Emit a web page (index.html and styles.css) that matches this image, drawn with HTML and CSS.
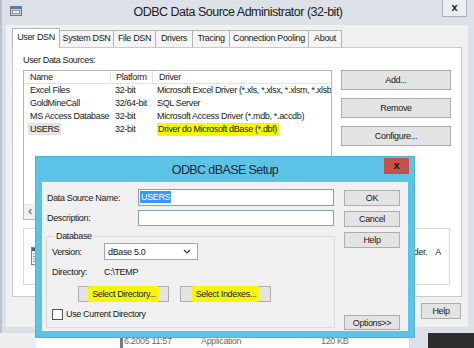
FILE: index.html
```html
<!DOCTYPE html>
<html lang="en">
<head>
    <meta charset="UTF-8">
    <title>ODBC Data Source Administrator</title>
    <link rel="stylesheet" href="styles.css">
</head>
<body>
<div class="desktop">

    <div class="admin">
        <div class="titlebar">
            <svg class="app-icon" width="12" height="12" viewBox="0 0 12 12">
                <rect x="0.5" y="1.5" width="11" height="9" fill="#c9d1d9" stroke="#6b7783"/>
                <rect x="1" y="2" width="10" height="2" fill="#4f7fb5"/>
                <rect x="2.5" y="5.5" width="7" height="3" fill="#eef1f4" stroke="#8c96a0"/>
            </svg>
            <span class="title">ODBC Data Source Administrator (32-bit)</span>
            <span class="close">x</span>
        </div>

        <div class="client">
            <div class="tabs">
                <span class="tab active">User DSN</span>
                <span class="tab t-system">System DSN</span>
                <span class="tab t-file">File DSN</span>
                <span class="tab t-drivers">Drivers</span>
                <span class="tab t-tracing">Tracing</span>
                <span class="tab t-pooling">Connection Pooling</span>
                <span class="tab t-about">About</span>
            </div>

            <div class="panel">
                <div class="sources-label">User Data Sources:</div>
                <div class="sources">
                    <div class="listview">
                        <div class="lv-head">
                            <span class="c-name">Name</span>
                            <span class="c-plat">Platform</span>
                            <span class="c-drv">Driver</span>
                        </div>
                        <div class="lv-rows">
                            <div class="lv-row">
                                <span class="c-name"><span class="nm">Excel Files</span></span>
                                <span class="c-plat">32-bit</span>
                                <span class="c-drv">Microsoft Excel Driver (*.xls, *.xlsx, *.xlsm, *.xlsb)</span>
                            </div>
                            <div class="lv-row">
                                <span class="c-name"><span class="nm">GoldMineCall</span></span>
                                <span class="c-plat">32/64-bit</span>
                                <span class="c-drv">SQL Server</span>
                            </div>
                            <div class="lv-row">
                                <span class="c-name"><span class="nm">MS Access Database</span></span>
                                <span class="c-plat">32-bit</span>
                                <span class="c-drv">Microsoft Access Driver (*.mdb, *.accdb)</span>
                            </div>
                            <div class="lv-row">
                                <span class="c-name"><span class="nm picked">USERS</span></span>
                                <span class="c-plat">32-bit</span>
                                <span class="c-drv"><span class="marker">Driver do Microsoft dBase (*.dbf)</span></span>
                            </div>
                        </div>
                        <div class="hscroll"><span class="arrow">&lsaquo;</span></div>
                    </div>
                    <div class="side-buttons">
                        <button>Add...</button>
                        <button>Remove</button>
                        <button>Configure...</button>
                    </div>
                </div>
                <div class="desc-box">
                    <svg class="doc-icon" width="12" height="18" viewBox="0 0 12 18">
                        <rect x="0.5" y="0.5" width="11" height="17" fill="#f4f6f8" stroke="#7d8894"/>
                        <rect x="1" y="1" width="10" height="3" fill="#3d5f8c"/>
                        <path d="M2 7h8M2 9.5h8M2 12h8M2 14.5h6" stroke="#8f9aa6"/>
                    </svg>
                    <div class="desc-text">An ODBC User data source stores information about how to connect to the indicated data provider.&nbsp;&nbsp;&nbsp; A</div>
                </div>
            </div>

            <div class="bottom-buttons">
                <button class="help">Help</button>
            </div>
        </div>
    </div>

    <div class="explorer-row">
        <span class="ex-edge"></span>
        <span></span>
        <span class="ex-bar"></span>
        <span class="ex-text">6.2005 11:57</span>
        <span class="ex-text">Application</span>
        <span class="ex-text">120 KB</span>
        <span class="ex-line"></span>
        <span class="ex-frame"></span>
        <span class="ex-dark"></span>
    </div>

    <div class="setup">
        <div class="setup-title">
            <span>ODBC dBASE Setup</span>
            <span class="setup-close">x</span>
        </div>
        <div class="setup-body">
            <div class="setup-main">
                <div class="field-row">
                    <span class="field-label">Data Source Name:</span>
                    <div class="textbox"><span class="sel">USERS</span></div>
                </div>
                <div class="field-row second">
                    <span class="field-label">Description:</span>
                    <div class="textbox"></div>
                </div>
                <fieldset class="db-group">
                    <legend>Database</legend>
                    <div class="group-grid">
                        <span>Version:</span>
                        <div class="combo">dBase 5.0
                            <svg width="8" height="5" viewBox="0 0 8 5"><path d="M1 1l3 3 3-3" fill="none" stroke="#333" stroke-width="1.2"/></svg>
                        </div>
                        <span class="dir-label">Directory:</span>
                        <span class="dir-value">C:\TEMP</span>
                    </div>
                    <div class="dir-buttons">
                        <button><span class="marker big">Select Directory...</span></button>
                        <button><span class="marker big">Select Indexes...</span></button>
                    </div>
                    <div class="check"><span class="box"></span>Use Current Directory</div>
                </fieldset>
            </div>
            <div class="setup-side">
                <button>OK</button>
                <button>Cancel</button>
                <button>Help</button>
                <button class="options">Options&gt;&gt;</button>
            </div>
        </div>
    </div>

</div>
</body>
</html>
```

FILE: styles.css
```css
* {
    box-sizing: border-box;
}

body {
    margin: 0;
    background: #fff;
    font-family: "Liberation Sans", Arial, sans-serif;
    font-size: 9px;
    letter-spacing: -0.35px;
    color: #1a1a1a;
}

button {
    font: inherit;
    letter-spacing: inherit;
    color: #1a1a1a;
    background: #e3e3e3;
    border: 1px solid #adadad;
    padding: 0;
    margin: 0;
}

.desktop {
    position: relative;
    width: 474px;
    height: 348px;
    overflow: hidden;
    background: #fff;
}

/* outer window */
.admin {
    position: absolute;
    left: 0;
    top: 0;
    width: 474px;
    height: 333px;
    padding: 0 6px 6px;
    background: #dbe1e7;
    border-left: 2px solid #b9c2cb;
    display: flex;
    flex-direction: column;
}

.titlebar {
    height: 25px;
    display: flex;
    align-items: center;
    position: relative;
}

.app-icon {
    margin: -4px 0 0 2px;
}

.title {
    position: absolute;
    left: 0;
    right: 0;
    top: 5px;
    text-align: center;
    font-size: 12.5px;
    letter-spacing: -0.5px;
    color: #222;
}

.close {
    position: absolute;
    right: 1px;
    top: 0;
    width: 25px;
    height: 17px;
    background: #eceef0;
    border: 1px solid #a9b0b8;
    border-top: none;
    text-align: center;
    font-weight: bold;
    font-size: 11px;
    letter-spacing: 0;
    line-height: 15px;
}

.client {
    flex: 1;
    margin-left: -2px;
    background: #f0f0f0;
    padding: 0 6px;
    display: flex;
    flex-direction: column;
}

.tabs {
    height: 22px;
    display: flex;
    align-items: flex-end;
    padding-left: 1px;
}

.tab {
    height: 17px;
    line-height: 15px;
    text-align: center;
    background: #f5f5f5;
    border: 1px solid #b4b4b4;
    border-bottom: none;
    margin-left: -1px;
    white-space: nowrap;
}

.tab.active {
    width: 48px;
    height: 20px;
    line-height: 17px;
    background: #fff;
    margin-bottom: -1px;
    position: relative;
    z-index: 1;
}

.t-system { width: 55px; }
.t-file { width: 43px; }
.t-drivers { width: 38px; }
.t-tracing { width: 38px; }
.t-pooling { width: 80px; }
.t-about { width: 34px; }

.panel {
    height: 250px;
    background: #fff;
    border: 1px solid #c9c9c9;
    padding: 6px 0 0 10px;
}

.sources-label {
    height: 12px;
    line-height: 12px;
}

.sources {
    display: flex;
    margin-top: 4px;
}

.listview {
    width: 309px;
    height: 150px;
    border: 1px solid #b5b7bd;
    display: flex;
    flex-direction: column;
    overflow: hidden;
}

.lv-head,
.lv-row {
    display: grid;
    grid-template-columns: 86px 42px 1fr;
    white-space: nowrap;
}

.lv-head {
    height: 13px;
    line-height: 12px;
    border-bottom: 1px solid #e2e2e2;
}

.lv-head span + span {
    border-left: 1px solid #e2e2e2;
}

.lv-rows {
    flex: 1;
}

.lv-row {
    height: 13px;
    line-height: 13px;
}

.c-name {
    padding-left: 4px;
}

.nm {
    padding: 1px 2px;
}

.nm.picked {
    background: #e4e4e4;
}

.c-plat {
    padding-left: 5px;
}

.c-drv {
    padding-left: 5px;
    overflow: hidden;
}

.lv-head .c-name {
    padding-left: 6px;
}

.lv-head .c-drv {
    padding-left: 6px;
}

.marker {
    background: #f6f60c;
    padding: 2px 2px 2px 1px;
    border-radius: 2px;
}

.marker.big {
    padding: 3px 3px 3px 4px;
}

.hscroll {
    height: 15px;
    border-top: 1px solid #e6e6e6;
    background: #f0f0f0;
}

.arrow {
    display: block;
    width: 13px;
    height: 14px;
    border-right: 1px solid #e0e0e0;
    text-align: center;
    font-size: 13px;
    line-height: 12px;
    color: #555;
}

.side-buttons {
    margin-left: 9px;
    display: flex;
    flex-direction: column;
    gap: 8px;
}

.side-buttons button {
    width: 110px;
    height: 20px;
}

.desc-box {
    width: 427px;
    height: 57px;
    margin-top: 8px;
    border: 1px solid #dadada;
    display: flex;
    align-items: flex-start;
    padding: 17px 8px 0 7px;
}

.doc-icon {
    flex: none;
    margin-top: 1px;
}

.desc-text {
    flex: 1;
    display: flex;
    justify-content: flex-end;
    white-space: nowrap;
    overflow: hidden;
    line-height: 12px;
    color: #222;
}

.bottom-buttons {
    display: flex;
    justify-content: flex-end;
    padding: 6px 1px 0 0;
}

.help {
    width: 40px;
    height: 16px;
}

/* desktop strip under the window */
.explorer-row {
    position: absolute;
    left: 0;
    top: 333px;
    width: 474px;
    height: 15px;
    display: grid;
    grid-template-columns: 36px 84px 3px 77px 120px 89px 1px 18px 1fr;
    line-height: 17px;
    color: #6a6a6a;
}

.ex-edge {
    background: #eceef0;
}

.ex-bar {
    background: #6f7c8a;
}

.ex-text {
    padding-left: 1px;
    white-space: nowrap;
}

.ex-line {
    background: #d5d5d5;
}

.ex-frame {
    background: #dbe1e7;
}

.ex-dark {
    background: #2e2e2e;
}

/* setup dialog */
.setup {
    position: absolute;
    left: 36px;
    top: 157px;
    width: 378px;
    height: 180px;
    background: #5cc3e6;
    padding: 0 6px 6px;
    display: flex;
    flex-direction: column;
    box-shadow: 0 0 0 1px #4eb3d8;
}

.setup-title {
    height: 25px;
    position: relative;
    text-align: center;
    font-size: 12.5px;
    letter-spacing: -0.6px;
    line-height: 26px;
    color: #1b2a33;
}

.setup-close {
    position: absolute;
    right: -1px;
    top: 1px;
    width: 25px;
    height: 16px;
    background: #c7504b;
    font-weight: bold;
    font-size: 11px;
    letter-spacing: 0;
    line-height: 15px;
    color: #1a1a1a;
}

.setup-body {
    flex: 1;
    background: #f0f0f0;
    display: grid;
    grid-template-columns: 302px 56px;
}

.setup-main {
    padding-top: 7px;
}

.field-row {
    display: flex;
    align-items: center;
}

.field-row.second {
    margin-top: 4px;
}

.field-label {
    width: 96px;
    padding-left: 5px;
}

.textbox {
    width: 196px;
    height: 17px;
    background: #fff;
    border: 1px solid #8b9db0;
    padding: 1px 0 0 1px;
}

.second .textbox {
    height: 16px;
}

.sel {
    display: inline-block;
    background: #3399ff;
    color: #fff;
    padding: 0 1px;
    line-height: 12px;
}

.db-group {
    margin: 4px 0 0 4px;
    width: 289px;
    height: 98px;
    padding: 0 0 0 5px;
    border: 1px solid #dcdcdc;
}

.db-group legend {
    padding: 0 2px;
    margin-left: 2px;
    line-height: 12px;
}

.group-grid {
    display: grid;
    grid-template-columns: 52px 94px;
    align-items: center;
    margin-top: 1px;
}

.combo {
    height: 17px;
    background: #fff;
    border: 1px solid #a8a8a8;
    display: flex;
    align-items: center;
    justify-content: space-between;
    padding: 0 6px 0 3px;
}

.dir-label,
.dir-value {
    margin-top: 6px;
    line-height: 12px;
}

.dir-buttons {
    display: flex;
    gap: 11px;
    margin: 8px 0 0 26px;
}

.dir-buttons button {
    width: 91px;
    height: 16px;
}

.check {
    display: flex;
    align-items: center;
    margin-top: 7px;
    line-height: 11px;
}

.box {
    width: 11px;
    height: 11px;
    border: 1px solid #555;
    background: #fff;
    margin-right: 3px;
}

.setup-side {
    display: flex;
    flex-direction: column;
    gap: 5px;
    padding-top: 8px;
}

.setup-side button {
    height: 16px;
}

.setup-side .options {
    margin-top: auto;
    margin-bottom: 1px;
    height: 15px;
}
```
